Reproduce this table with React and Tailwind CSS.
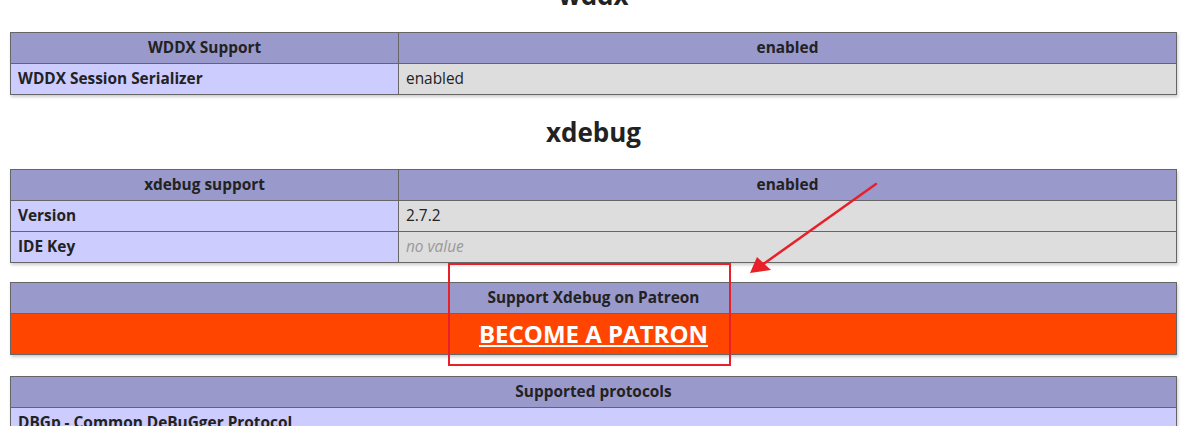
import React from 'react';

const th = 'border border-[#666] bg-[#9999cc] h-[31px] px-[7px] py-0 text-center font-bold';
const tdE = 'border border-[#666] bg-[#ccccff] h-[31px] px-[7px] py-0 text-left font-bold w-[388px]';
const tdV = 'border border-[#666] bg-[#dddddd] h-[31px] px-[7px] py-0 text-left';

function InfoTable({ children }) {
  return (
    <table className="w-[1167px] border-collapse shadow-[1px_2px_3px_#ccc]">
      <tbody>{children}</tbody>
    </table>
  );
}

function Heading({ children, className = '' }) {
  return (
    <h2 className={`h-[31px] text-center text-[26px] font-bold leading-[31px] ${className}`}>{children}</h2>
  );
}

export default function App() {
  return (
    <div
      className="relative h-[426px] overflow-hidden bg-white text-[15.4px] text-[#222]"
      style={{ fontFamily: '"Open Sans", "Noto Sans", sans-serif' }}
    >
      <div className="pl-[10px]">
        <Heading className="mt-[-20px] mb-[21px] w-[1167px]">wddx</Heading>
        <InfoTable>
          <tr>
            <th className={th}>WDDX Support</th>
            <th className={th}>enabled</th>
          </tr>
          <tr>
            <td className={tdE}>WDDX Session Serializer</td>
            <td className={tdV}>enabled</td>
          </tr>
        </InfoTable>

        <Heading className="mt-[22px] mb-[21px] w-[1167px]">xdebug</Heading>
        <InfoTable>
          <tr>
            <th className={th}>xdebug support</th>
            <th className={th}>enabled</th>
          </tr>
          <tr>
            <td className={tdE}>Version</td>
            <td className={tdV}>2.7.2</td>
          </tr>
          <tr>
            <td className={tdE}>IDE Key</td>
            <td className={tdV}>
              <i className="text-[#999]">no value</i>
            </td>
          </tr>
        </InfoTable>

        <div className="h-[19px]" />
        <InfoTable>
          <tr>
            <th className={th}>Support Xdebug on Patreon</th>
          </tr>
          <tr>
            <td className="border border-[#666] bg-[#ff4500] h-[40px] p-0 text-center">
              <a href="#" className="text-[24px] font-bold leading-[40px] text-white underline">
                BECOME A PATRON
              </a>
            </td>
          </tr>
        </InfoTable>

        <div className="h-[21px]" />
        <InfoTable>
          <tr>
            <th className={th}>Supported protocols</th>
          </tr>
          <tr>
            <td className="border border-[#666] bg-[#ccccff] h-[31px] px-[7px] py-0 text-left font-bold">
              DBGp - Common DeBuGger Protocol
            </td>
          </tr>
        </InfoTable>
      </div>

      {/* red annotation */}
      <div className="absolute left-[448px] top-[263px] h-[103px] w-[283px] border-2 border-[#e8202a]" />
      <svg className="absolute left-0 top-0" width="1201" height="426">
        <line x1="876" y1="184" x2="762" y2="265" stroke="#e8202a" strokeWidth="2.5" strokeLinecap="round" />
        <polygon points="750,273 757,257 771,270" fill="#e8202a" />
      </svg>
    </div>
  );
}
